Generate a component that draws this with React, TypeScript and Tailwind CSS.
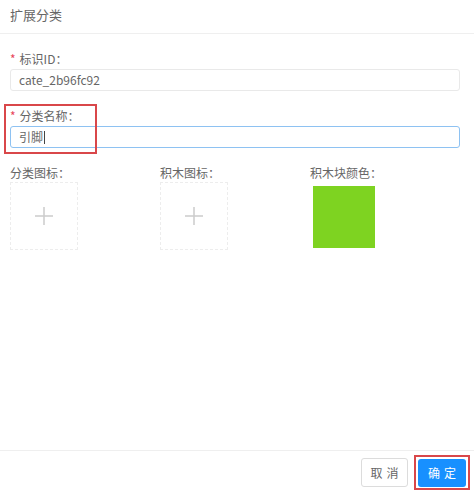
import React from "react";

const font = { fontFamily: '"Noto Sans CJK SC", "Liberation Sans", sans-serif' };

const Plus = () => (
  <svg width="20" height="20" viewBox="0 0 20 20" fill="none">
    <path d="M10 1v18M1 10h18" stroke="#cccccc" strokeWidth="1.5" />
  </svg>
);

const Label = ({ text, required }: { text: string; required?: boolean }) => (
  <div className="flex items-center h-[20px] text-[12px] text-[#666]">
    {required && <span className="text-[#e8455a] mr-[4px] text-[12px] leading-none">*</span>}
    {text}
  </div>
);

const UploadBox = () => (
  <div className="w-[68px] h-[68px] border border-dashed border-[#ededed] flex items-center justify-center">
    <Plus />
  </div>
);

export default function App() {
  return (
    <div className="w-[474px] h-[494px] bg-white flex flex-col" style={font}>
      <div className="h-[34px] px-[10px] flex items-center border-b border-[#efefef] text-[13px] text-[#666] pb-[3px]">
        扩展分类
      </div>

      <div className="flex-1 px-[10px] pt-[15px] pr-[14px]">
        <Label text="标识ID：" required />
        <div className="h-[22px] border border-[#e9e9e9] rounded-[3px] flex items-center px-[8px] text-[12px] text-[#666]">
          cate_2b96fc92
        </div>

        <div className="relative mt-[15px]">
          <Label text="分类名称：" required />
          <div className="h-[22px] border border-[#8ec2f2] rounded-[3px] flex items-center px-[8px] text-[12px] text-[#666]">
            引脚<span className="inline-block w-px h-[13px] bg-[#444] ml-px" />
          </div>
          <div className="absolute left-[-6px] top-[-2px] w-[93px] h-[50px] border-2 border-[#d9474a] pointer-events-none" />
        </div>

        <div className="grid grid-cols-[150px_150px_150px] mt-[15px]">
          <div>
            <div className="h-[19px] text-[12px] text-[#666] flex items-center">分类图标：</div>
            <UploadBox />
          </div>
          <div>
            <div className="h-[19px] text-[12px] text-[#666] flex items-center">积木图标：</div>
            <UploadBox />
          </div>
          <div>
            <div className="h-[19px] text-[12px] text-[#666] flex items-center">积木块颜色：</div>
            <div className="ml-[3px] mt-[4px] w-[62px] h-[62px] bg-[#7ed321]" />
          </div>
        </div>
      </div>

      <div className="h-[44px] border-t border-[#efefef] flex items-center justify-end pr-[8px] gap-[10px]">
        <button className="w-[47px] h-[29px] border border-[#dcdcdc] rounded-[3px] bg-white text-[12px] text-[#666] tracking-[4px] pl-[4px]">
          取消
        </button>
        <div className="relative">
          <button className="w-[48px] h-[28px] rounded-[3px] bg-[#1890ff] text-[12px] text-white tracking-[4px] pl-[4px]">
            确定
          </button>
          <div className="absolute left-[-4px] top-[-4px] w-[56px] h-[35px] border-2 border-[#d9474a] pointer-events-none" />
        </div>
      </div>
    </div>
  );
}
